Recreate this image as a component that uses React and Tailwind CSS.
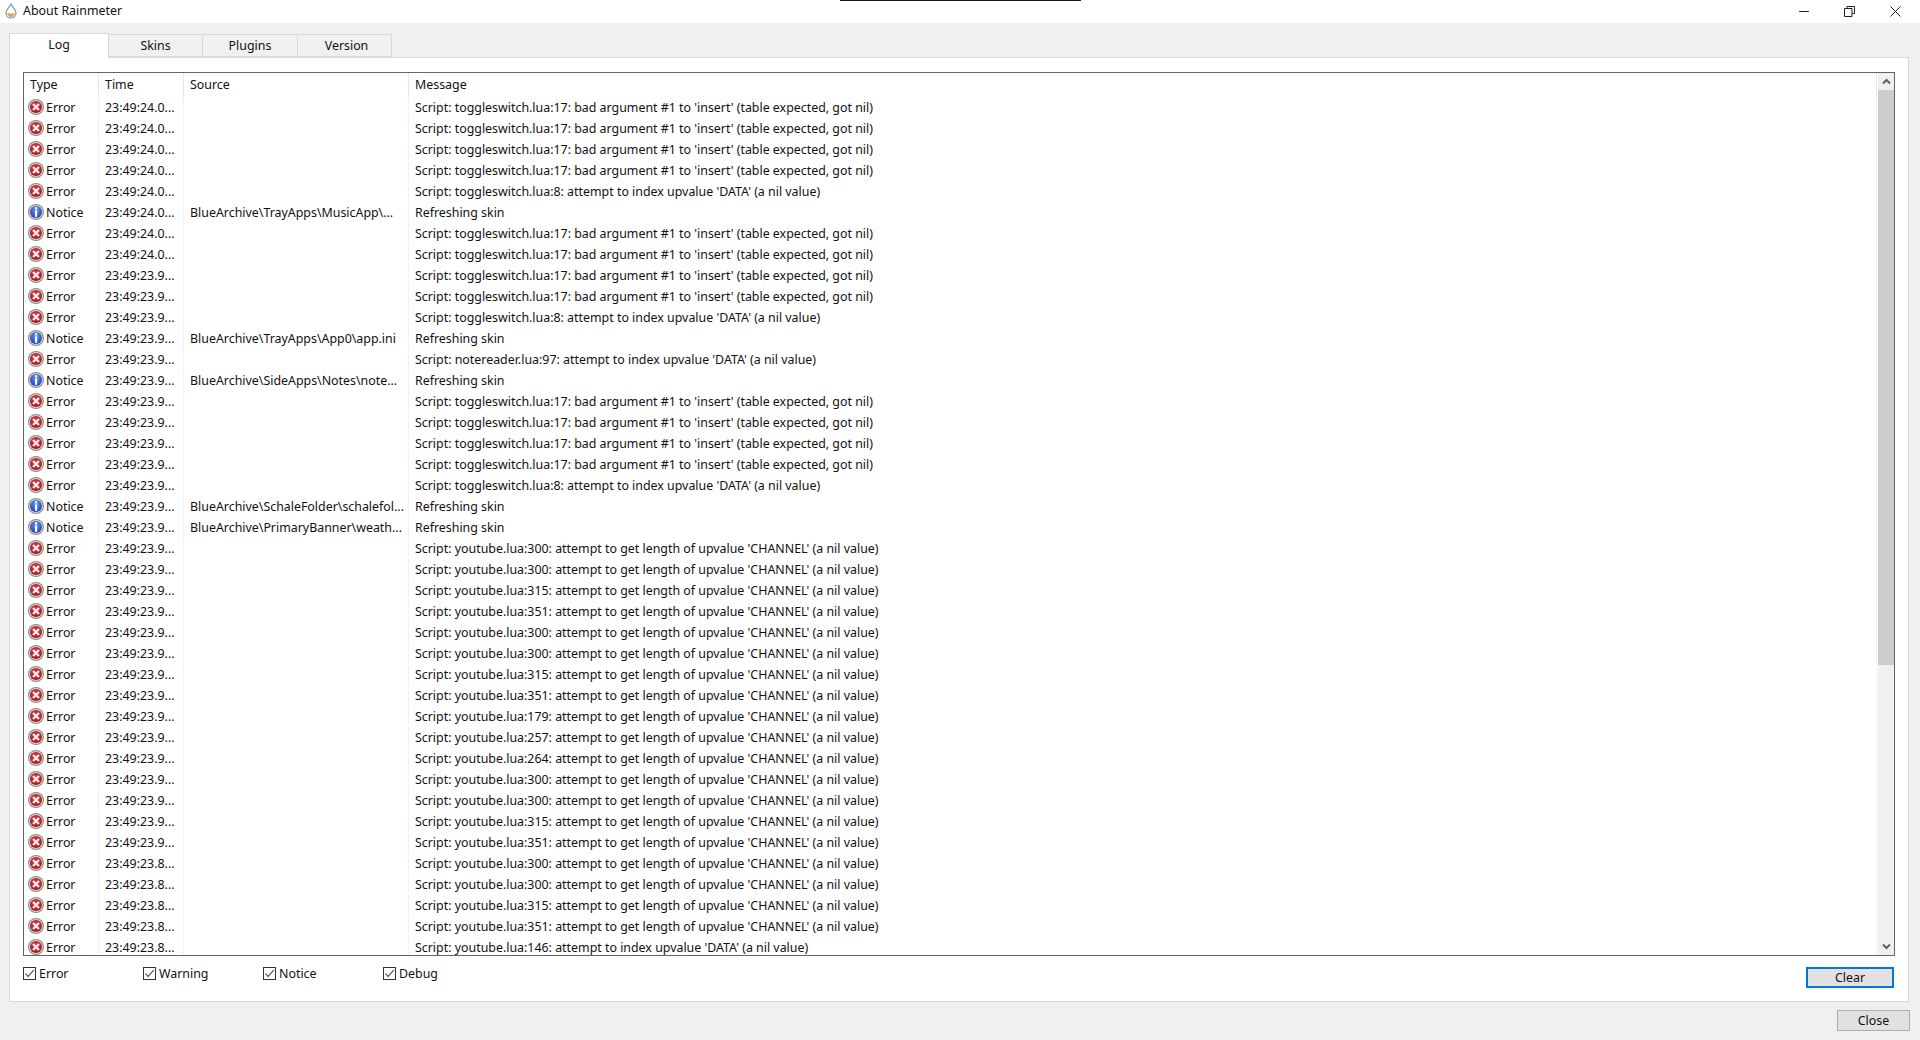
const toggle17 = "Script: toggleswitch.lua:17: bad argument #1 to 'insert' (table expected, got nil)";
const toggle8 = "Script: toggleswitch.lua:8: attempt to index upvalue 'DATA' (a nil value)";
const refresh = "Refreshing skin";
const yt = (n) => `Script: youtube.lua:${n}: attempt to get length of upvalue 'CHANNEL' (a nil value)`;

const logRows = [
  ["Error", "23:49:24.0...", "", toggle17],
  ["Error", "23:49:24.0...", "", toggle17],
  ["Error", "23:49:24.0...", "", toggle17],
  ["Error", "23:49:24.0...", "", toggle17],
  ["Error", "23:49:24.0...", "", toggle8],
  ["Notice", "23:49:24.0...", "BlueArchive\\TrayApps\\MusicApp\\...", refresh],
  ["Error", "23:49:24.0...", "", toggle17],
  ["Error", "23:49:24.0...", "", toggle17],
  ["Error", "23:49:23.9...", "", toggle17],
  ["Error", "23:49:23.9...", "", toggle17],
  ["Error", "23:49:23.9...", "", toggle8],
  ["Notice", "23:49:23.9...", "BlueArchive\\TrayApps\\App0\\app.ini", refresh],
  ["Error", "23:49:23.9...", "", "Script: notereader.lua:97: attempt to index upvalue 'DATA' (a nil value)"],
  ["Notice", "23:49:23.9...", "BlueArchive\\SideApps\\Notes\\note...", refresh],
  ["Error", "23:49:23.9...", "", toggle17],
  ["Error", "23:49:23.9...", "", toggle17],
  ["Error", "23:49:23.9...", "", toggle17],
  ["Error", "23:49:23.9...", "", toggle17],
  ["Error", "23:49:23.9...", "", toggle8],
  ["Notice", "23:49:23.9...", "BlueArchive\\SchaleFolder\\schalefol...", refresh],
  ["Notice", "23:49:23.9...", "BlueArchive\\PrimaryBanner\\weath...", refresh],
  ["Error", "23:49:23.9...", "", yt(300)],
  ["Error", "23:49:23.9...", "", yt(300)],
  ["Error", "23:49:23.9...", "", yt(315)],
  ["Error", "23:49:23.9...", "", yt(351)],
  ["Error", "23:49:23.9...", "", yt(300)],
  ["Error", "23:49:23.9...", "", yt(300)],
  ["Error", "23:49:23.9...", "", yt(315)],
  ["Error", "23:49:23.9...", "", yt(351)],
  ["Error", "23:49:23.9...", "", yt(179)],
  ["Error", "23:49:23.9...", "", yt(257)],
  ["Error", "23:49:23.9...", "", yt(264)],
  ["Error", "23:49:23.9...", "", yt(300)],
  ["Error", "23:49:23.9...", "", yt(300)],
  ["Error", "23:49:23.9...", "", yt(315)],
  ["Error", "23:49:23.9...", "", yt(351)],
  ["Error", "23:49:23.8...", "", yt(300)],
  ["Error", "23:49:23.8...", "", yt(300)],
  ["Error", "23:49:23.8...", "", yt(315)],
  ["Error", "23:49:23.8...", "", yt(351)],
  ["Error", "23:49:23.8...", "", "Script: youtube.lua:146: attempt to index upvalue 'DATA' (a nil value)"],
];

function ErrorIcon() {
  return (
    <svg width="16" height="16" viewBox="0 0 16 16" className="mt-[2px] shrink-0">
      <defs>
        <radialGradient id="errFill" cx="50%" cy="40%" r="60%">
          <stop offset="0%" stopColor="#e8474c" />
          <stop offset="100%" stopColor="#a8141b" />
        </radialGradient>
      </defs>
      <circle cx="8" cy="8" r="8" fill="#8a8a8a" />
      <circle cx="8" cy="8" r="7" fill="#d4d4d4" />
      <circle cx="8" cy="8" r="6" fill="url(#errFill)" />
      <path d="M5 5 11 11M11 5 5 11" stroke="#f6f0f0" strokeWidth="2.2" />
    </svg>
  );
}

function NoticeIcon() {
  return (
    <svg width="16" height="16" viewBox="0 0 16 16" className="mt-[2px] shrink-0">
      <defs>
        <radialGradient id="infoFill" cx="50%" cy="35%" r="65%">
          <stop offset="0%" stopColor="#6a9af5" />
          <stop offset="100%" stopColor="#1c3fb0" />
        </radialGradient>
      </defs>
      <circle cx="8" cy="8" r="8" fill="#8a8a8a" />
      <circle cx="8" cy="8" r="7" fill="#d4d4d4" />
      <circle cx="8" cy="8" r="6" fill="url(#infoFill)" />
      <rect x="7" y="3.2" width="2.2" height="2.2" fill="#ffffff" />
      <rect x="7" y="6.400" width="2.2" height="6.400" fill="#ffffff" />
    </svg>
  );
}

function Check({ label }) {
  return (
    <div className="flex w-[120px] items-center">
      <span className="flex h-[13px] w-[13px] items-center justify-center border border-[#333333] bg-white">
        <svg width="11" height="11" viewBox="0 0 11 11">
          <path d="M1.500 5.500 4.200 8.500 9.800 2" fill="none" stroke="#333333" strokeWidth="1.100" />
        </svg>
      </span>
      <span className="ml-[3px]">{label}</span>
    </div>
  );
}

export default function App() {
  return (
    <div className="relative flex h-[1040px] w-[1920px] flex-col overflow-hidden bg-[#f0f0f0] font-['Noto_Sans',sans-serif] text-[12.4px] leading-[18px] text-[#111111]">
      {/* stray capture line along the top edge */}
      <div className="absolute left-[840px] top-0 h-px w-[241px] bg-[#1a1a1a]" />

      <div className="flex h-[23px] items-center bg-white pb-[1px]">
        <svg width="12" height="16" viewBox="0 0 12 16" className="ml-[5px]">
          <path d="M6 1C4.500 4 1 7 1 10.200 1 13 3.200 15 6 15s5-2 5-4.800C11 7 7.500 4 6 1Z" fill="#ffffff" stroke="#6f93b5" strokeWidth="1.100" />
          <path d="M2.200 10c1.500.6 6 .6 7.600 0 .2 2.400-1.600 3.900-3.800 3.900S2 12.400 2.200 10Z" fill="#e9a04a" />
        </svg>
        <span className="ml-[6px]">About Rainmeter</span>
        <div className="ml-auto flex items-center">
          <svg width="11" height="11" viewBox="0 0 11 11" className="mr-[34px]">
            <path d="M0 5.500H10" stroke="#222222" />
          </svg>
          <svg width="11" height="11" viewBox="0 0 11 11" className="mr-[35px]">
            <path d="M3 2.500V.5H10.500V7.500H8M.5 2.500H8V10.500H.5Z" fill="none" stroke="#222222" />
          </svg>
          <svg width="11" height="11" viewBox="0 0 11 11" className="mr-[19px]">
            <path d="M.5.5 10.500 10.500M10.500.5 .5 10.500" stroke="#222222" />
          </svg>
        </div>
      </div>

      <div className="flex h-[34px] items-end pl-[9px]">
        <div className="relative z-10 -mb-px flex h-[25px] w-[100px] items-center justify-center border border-b-0 border-[#d9d9d9] bg-white pb-[2px]">Log</div>
        <div className="flex h-[23px] w-[94px] items-center justify-center border border-l-0 border-[#d9d9d9]">Skins</div>
        <div className="flex h-[23px] w-[95px] items-center justify-center border border-l-0 border-[#d9d9d9]">Plugins</div>
        <div className="flex h-[23px] w-[94px] items-center justify-center border border-l-0 border-[#d9d9d9] pl-[4px]">Version</div>
      </div>

      <div className="ml-[9px] flex h-[945px] w-[1900px] flex-col border border-[#d9d9d9] bg-white pl-[13px] pr-[13px] pt-[14px]">
        <div className="flex h-[884px] border border-[#646464]">
          <div className="flex-1 overflow-hidden">
            <div className="flex h-[24px] items-stretch pr-[1px]">
              <div className="w-[75px] border-r border-[#e5e5e5] pl-[6px] leading-[23px]">Type</div>
              <div className="w-[85px] border-r border-[#e5e5e5] pl-[6px] leading-[23px]">Time</div>
              <div className="w-[225px] border-r border-[#e5e5e5] pl-[6px] leading-[23px]">Source</div>
              <div className="flex-1 border-r border-[#e5e5e5] pl-[6px] leading-[23px]">Message</div>
            </div>
            {logRows.map((row, index) => (
              <div key={index} className="flex h-[21px] shrink-0 items-stretch pr-[1px]">
                <div className="flex w-[75px] items-start border-r border-[#eef3fb] pl-[4px]">
                  {row[0] === "Error" ? <ErrorIcon /> : <NoticeIcon />}
                  <span className="ml-[2px] leading-[21px]">{row[0]}</span>
                </div>
                <div className="w-[85px] border-r border-[#eef3fb] pl-[6px] leading-[21px]">{row[1]}</div>
                <div className="w-[225px] whitespace-nowrap border-r border-[#eef3fb] pl-[6px] leading-[21px]">{row[2]}</div>
                <div className="flex-1 border-r border-[#eef3fb] pl-[6px] leading-[21px]">{row[3]}</div>
              </div>
            ))}
          </div>

          <div className="flex w-[16px] flex-col bg-[#f0f0f0]">
            <div className="flex h-[17px] items-center justify-center">
              <svg width="9" height="7" viewBox="0 0 9 7">
                <path d="M1 5.500 4.500 2 8 5.500" fill="none" stroke="#606060" strokeWidth="2" />
              </svg>
            </div>
            <div className="h-[575px] bg-[#cdcdcd]" />
            <div className="flex-1" />
            <div className="flex h-[17px] items-center justify-center">
              <svg width="9" height="7" viewBox="0 0 9 7">
                <path d="M1 1.500 4.500 5 8 1.500" fill="none" stroke="#606060" strokeWidth="2" />
              </svg>
            </div>
          </div>
        </div>

        <div className="mt-[11px] flex items-start">
          <div className="flex h-[13px] items-center">
            <Check label="Error" />
            <Check label="Warning" />
            <Check label="Notice" />
            <Check label="Debug" />
          </div>
          <button className="ml-auto mr-[1px] h-[21px] w-[88px] border-2 border-[#0078d7] bg-[#e1e1e1] leading-[16px]">Clear</button>
        </div>
      </div>

      <div className="flex flex-1 items-start justify-end pr-[10px] pt-[8px]">
        <button className="h-[21px] w-[73px] border border-[#adadad] bg-[#e1e1e1] leading-[18px]">Close</button>
      </div>
    </div>
  );
}
